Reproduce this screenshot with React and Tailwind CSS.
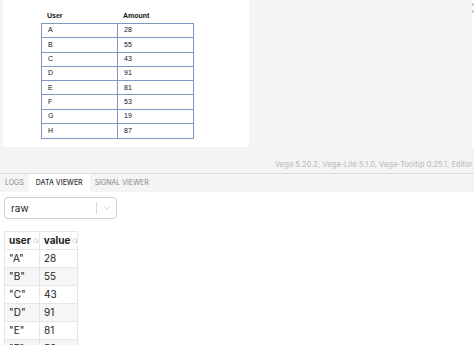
import { ChevronDown, Search } from "lucide-react";

const vegaRows = [
  ["A", 28],
  ["B", 55],
  ["C", 43],
  ["D", 91],
  ["E", 81],
  ["F", 53],
  ["G", 19],
  ["H", 87],
];

function VegaTable() {
  return (
    <div className="pt-[10px] pl-[38px] font-['Liberation_Sans',Arial,sans-serif] text-[7px] text-[#111]">
      <div className="flex h-[13px] items-center font-bold">
        <div className="w-[76px] pl-[6px]">User</div>
        <div className="w-[76px] pl-[6px]">Amount</div>
      </div>
      <div className="w-[153px] border border-[#7f98c0]">
        {vegaRows.map(([u, a], i) => (
          <div
            key={u}
            className={`flex h-[14.3px] ${i < vegaRows.length - 1 ? "border-b border-[#7f98c0]" : ""}`}
          >
            <div className="flex w-[76px] items-center border-r border-[#7f98c0] pl-[6px]">{u}</div>
            <div className="flex flex-1 items-center pl-[6px]">{a}</div>
          </div>
        ))}
      </div>
    </div>
  );
}

function DataTable() {
  return (
    <div className="mt-[12px] ml-[4px] w-[74px] text-[10px] text-[#222]">
      <div className="flex h-[19px] border border-[#e6e6e6] bg-white font-bold">
        <div className="flex w-[35px] items-center gap-[2px] border-r border-[#e6e6e6] pl-[4px]">
          user <Search size={6} className="text-[#b0b0b0]" strokeWidth={2} />
        </div>
        <div className="flex flex-1 items-center gap-[2px] pl-[4px]">
          value <Search size={6} className="text-[#b0b0b0]" strokeWidth={2} />
        </div>
      </div>
      {vegaRows.map(([u, a], i) => (
        <div
          key={u}
          className={`flex h-[18px] border-x border-b border-[#e6e6e6] ${i % 2 === 1 ? "bg-[#f6f6f6]" : "bg-white"}`}
        >
          <div className="flex w-[35px] items-center border-r border-[#e6e6e6] pl-[4px]">"{u}"</div>
          <div className="flex flex-1 items-center pl-[4px]">{a}</div>
        </div>
      ))}
    </div>
  );
}

export default function App() {
  return (
    <div className="relative h-[345px] w-[474px] overflow-hidden bg-white font-['Inter','Liberation_Sans',sans-serif]">
      {/* output area */}
      <div className="bg-[#f4f4f4]">
        <div className="flex h-[147px]">
          <div className="ml-[3px] w-[246px] bg-white">
            <VegaTable />
          </div>
          <div className="flex-1" />
          <div className="flex w-[2px] flex-col gap-[4px] bg-white pt-[3px]">
            <div className="h-[3px] w-[2px] bg-[#ccc]" />
            <div className="h-[3px] w-[2px] bg-[#ccc]" />
          </div>
        </div>
        <div className="flex h-[27px] items-end overflow-hidden whitespace-nowrap border-b border-[#dcdcdc] pb-[3px] pl-[275px] text-[7.6px] text-[#b8b8b8]">
          Vega 5.20.2, Vega-Lite 5.1.0, Vega-Tooltip 0.25.1, Editor 0.110.0
        </div>
        {/* tabs */}
        <div className="flex h-[18px] items-stretch text-[7px] uppercase">
          <div className="flex items-center px-[5px] text-[#888]">Logs</div>
          <div className="flex items-center bg-white px-[7px] font-medium text-[#333]">Data Viewer</div>
          <div className="flex items-center px-[5px] text-[#888]">Signal Viewer</div>
        </div>
      </div>

      {/* data viewer */}
      <div className="pt-[5px]">
        <div className="ml-[4px] flex h-[22px] w-[113px] items-center rounded-[4px] border border-[#cfcfcf] bg-white">
          <div className="flex-1 pl-[6px] text-[10px] text-[#222]">raw</div>
          <div className="h-[12px] w-px bg-[#d6d6d6]" />
          <div className="flex w-[19px] items-center justify-center">
            <ChevronDown size={10} className="text-[#c4c4c4]" />
          </div>
        </div>
        <DataTable />
      </div>
    </div>
  );
}
